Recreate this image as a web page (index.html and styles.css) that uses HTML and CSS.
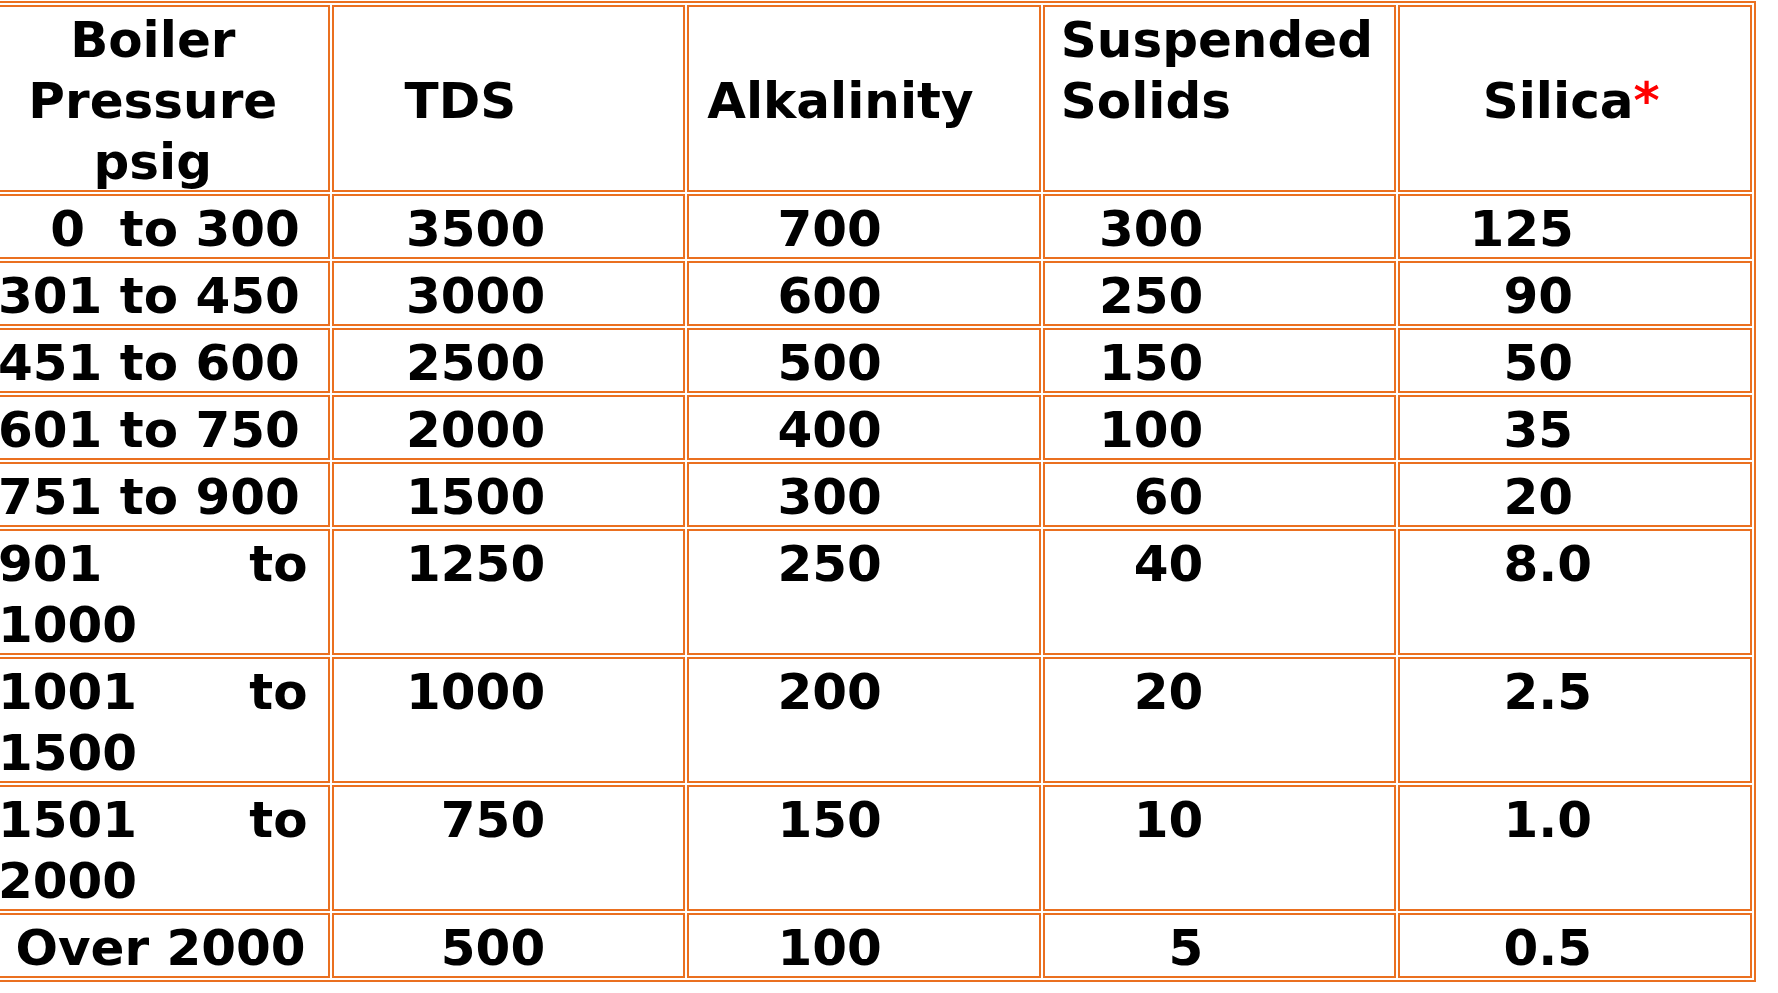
FILE: index.html
```html
<!DOCTYPE html>
<html>
<head>
<meta charset="utf-8">
<title>Boiler water limits</title>
<link rel="stylesheet" href="styles.css">
</head>
<body>
<table class="limits">
  <tr>
    <td class="c1 h"><span class="t">Boiler Pressure psig</span></td>
    <td class="c2 h"><span class="t">TDS</span></td>
    <td class="c3 h"><span class="t">Alkalinity</span></td>
    <td class="c4 h"><span class="t">Suspended Solids</span></td>
    <td class="c5 h"><span class="t">Silica<span class="star">*</span></span></td>
  </tr>
  <tr>
    <td class="c1"><span class="t">&nbsp;&nbsp;&nbsp;0&nbsp;&nbsp;to 300</span></td>
    <td class="c2"><span class="t">3500</span></td>
    <td class="c3"><span class="t">700</span></td>
    <td class="c4"><span class="t">300</span></td>
    <td class="c5 wide"><span class="t">125</span></td>
  </tr>
  <tr>
    <td class="c1"><span class="t">301 to 450</span></td>
    <td class="c2"><span class="t">3000</span></td>
    <td class="c3"><span class="t">600</span></td>
    <td class="c4"><span class="t">250</span></td>
    <td class="c5"><span class="t">90</span></td>
  </tr>
  <tr>
    <td class="c1"><span class="t">451 to 600</span></td>
    <td class="c2"><span class="t">2500</span></td>
    <td class="c3"><span class="t">500</span></td>
    <td class="c4"><span class="t">150</span></td>
    <td class="c5"><span class="t">50</span></td>
  </tr>
  <tr>
    <td class="c1"><span class="t">601 to 750</span></td>
    <td class="c2"><span class="t">2000</span></td>
    <td class="c3"><span class="t">400</span></td>
    <td class="c4"><span class="t">100</span></td>
    <td class="c5"><span class="t">35</span></td>
  </tr>
  <tr>
    <td class="c1"><span class="t">751 to 900</span></td>
    <td class="c2"><span class="t">1500</span></td>
    <td class="c3"><span class="t">300</span></td>
    <td class="c4"><span class="t">60</span></td>
    <td class="c5"><span class="t">20</span></td>
  </tr>
  <tr>
    <td class="c1"><span class="t">901 to 1000</span></td>
    <td class="c2"><span class="t">1250</span></td>
    <td class="c3"><span class="t">250</span></td>
    <td class="c4"><span class="t">40</span></td>
    <td class="c5"><span class="t">8.0</span></td>
  </tr>
  <tr>
    <td class="c1"><span class="t">1001 to 1500</span></td>
    <td class="c2"><span class="t">1000</span></td>
    <td class="c3"><span class="t">200</span></td>
    <td class="c4"><span class="t">20</span></td>
    <td class="c5"><span class="t">2.5</span></td>
  </tr>
  <tr>
    <td class="c1"><span class="t">1501 to 2000</span></td>
    <td class="c2"><span class="t">750</span></td>
    <td class="c3"><span class="t">150</span></td>
    <td class="c4"><span class="t">10</span></td>
    <td class="c5"><span class="t">1.0</span></td>
  </tr>
  <tr>
    <td class="c1"><span class="t">&nbsp;Over 2000</span></td>
    <td class="c2"><span class="t">500</span></td>
    <td class="c3"><span class="t">100</span></td>
    <td class="c4"><span class="t">5</span></td>
    <td class="c5"><span class="t">0.5</span></td>
  </tr>
</table>
</body>
</html>
```

FILE: styles.css
```css
html, body {
  margin: 0;
  padding: 0;
  background: #ffffff;
}

body {
  font-family: "DejaVu Sans", Verdana, sans-serif;
  font-weight: bold;
  font-size: 50px;
  line-height: 61px;
  color: #000000;
  overflow: hidden;
}

.limits {
  table-layout: fixed;
  width: 1784px;
  margin: 1px 0 0 -28px;
  border: 2px solid #ea7020;
  border-collapse: separate;
  border-spacing: 2px;
}

.limits td {
  border: 2px solid #ea7020;
  padding: 0;
  vertical-align: top;
  line-height: 61px;
}

/* lowers the glyphs ~3px inside the 61px line box without growing it */
.t {
  line-height: 55px;
  vertical-align: -3px;
}

.c1 {
  text-align: justify;
  padding: 0 20px !important;
}

.c1.h {
  text-align: center;
}

.c2 {
  text-align: right;
  padding: 0 138px 0 20px !important;
}

.c2.h {
  text-align: left;
  vertical-align: middle !important;
  padding: 0 20px 0 71px !important;
}

.c3 {
  text-align: right;
  padding: 0 157px 0 20px !important;
}

.c3.h {
  text-align: left;
  vertical-align: middle !important;
  padding: 0 20px 0 18px !important;
}

.c4 {
  text-align: right;
  padding: 0 191px 0 20px !important;
}

.c4.h {
  text-align: left;
  padding: 0 16px 0 16px !important;
}

.c5 {
  text-align: left;
  padding: 0 20px 0 103px !important;
}

.c5.wide {
  padding-left: 69px !important;
}

.c5.h {
  text-align: center;
  vertical-align: middle !important;
  padding: 0 20px 0 12px !important;
}

.star {
  color: #ff0000;
}
```
